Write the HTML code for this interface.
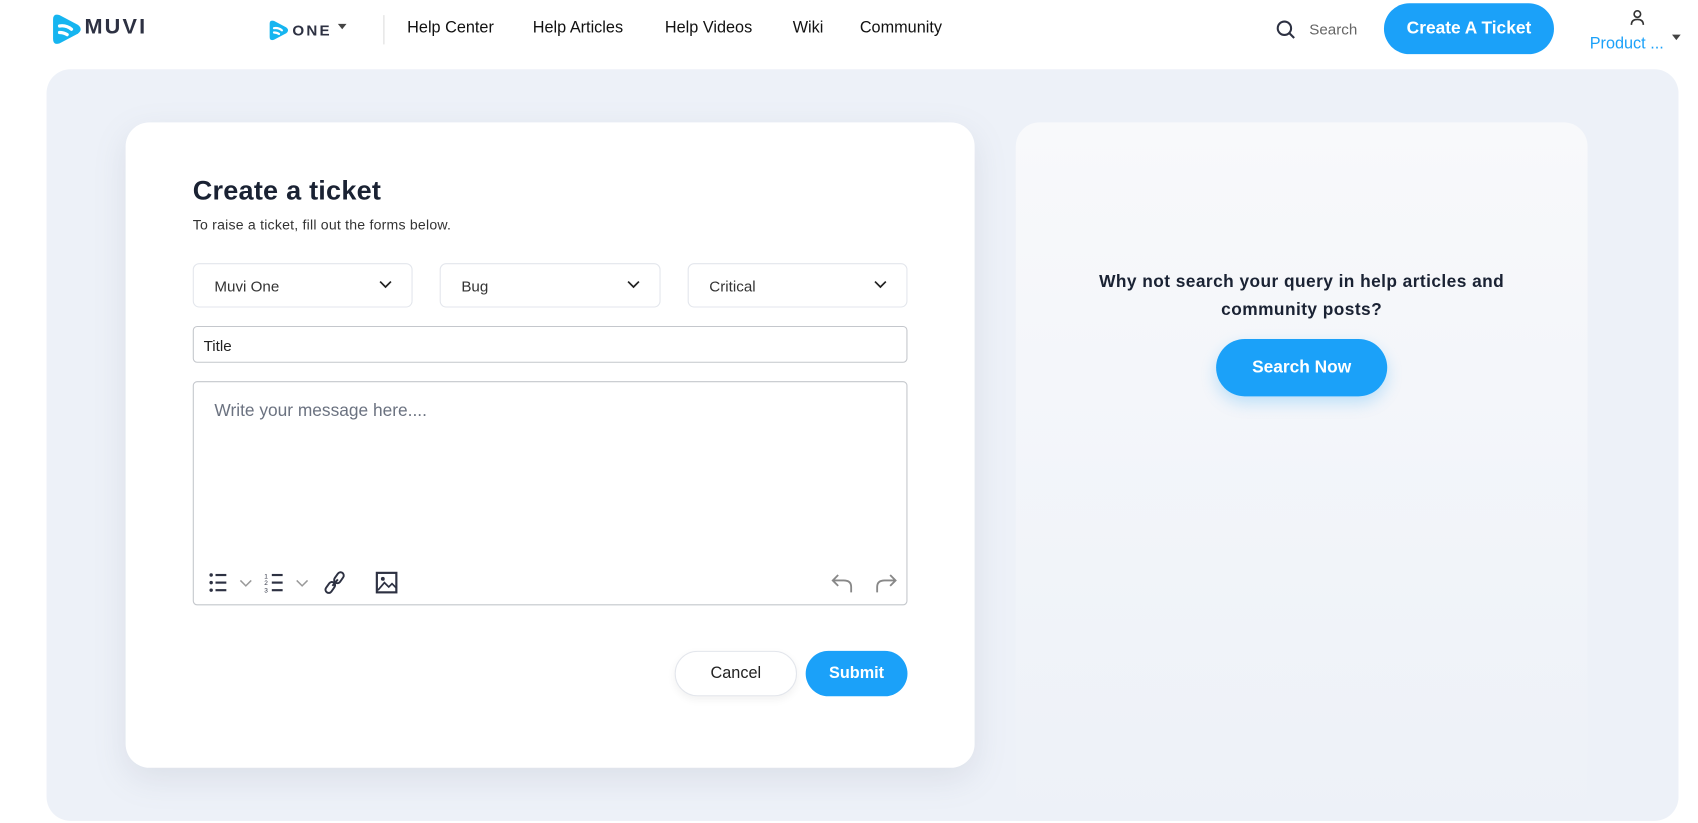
<!DOCTYPE html>
<html><head><meta charset="utf-8"><style>
*{box-sizing:border-box;margin:0;padding:0}
html,body{width:1698px;height:823px;overflow:hidden;background:#fff}
#w{width:1568px;height:760px;position:relative;transform:scale(1.08291);transform-origin:0 0;font-family:"Liberation Sans",sans-serif;color:#111}
.a{position:absolute}
.nav{font-size:15px;color:#111;top:17px}
.sel{position:absolute;top:243px;height:41px;border:1px solid #e3e6ec;border-radius:6px;background:#fff;font-size:14px;color:#333;padding:12px 0 0 19px}
.sel svg{position:absolute;right:18px;top:15px}
.blue{background:#1ba1f9;color:#fff;font-weight:bold;border-radius:30px;text-align:center}
</style></head><body><div id="w">
<svg class="a" style="left:46px;top:12px" width="30" height="30" viewBox="0 0 30 30"><path d="M3 6 Q3 0 9 2 L26 11 Q31 15 26 19 L9 28 Q3 30 3 24Z" fill="#16b5f0"/><path d="M9 12 Q15 11 20 15 M9 18 Q13 18 16 20" stroke="#fff" stroke-width="3" fill="none" stroke-linecap="round"/></svg>
<div class="a" style="left:78px;top:14px;font-size:20px;font-weight:bold;letter-spacing:2px;color:#2d3142">MUVI</div>
<svg class="a" style="left:247px;top:17px" width="20" height="22" viewBox="0 0 30 30"><path d="M3 6 Q3 0 9 2 L26 11 Q31 15 26 19 L9 28 Q3 30 3 24Z" fill="#16b5f0"/><path d="M9 12 Q15 11 20 15 M9 18 Q13 18 16 20" stroke="#fff" stroke-width="3" fill="none" stroke-linecap="round"/></svg>
<div class="a" style="left:270px;top:20px;font-size:14px;font-weight:bold;letter-spacing:2px;color:#2d3142">ONE</div>
<div class="a" style="left:312px;top:22px;border:4px solid transparent;border-top:5px solid #444"></div>
<div class="a" style="left:354px;top:14px;width:1px;height:27px;background:#ddd"></div>
<div class="a nav" style="left:376px">Help Center</div>
<div class="a nav" style="left:492px">Help Articles</div>
<div class="a nav" style="left:614px">Help Videos</div>
<div class="a nav" style="left:732px">Wiki</div>
<div class="a nav" style="left:794px">Community</div>
<svg class="a" style="left:1178px;top:18px" width="19" height="19" viewBox="0 0 20 20"><circle cx="8.5" cy="8.5" r="6.5" fill="none" stroke="#2d3142" stroke-width="2"/><path d="M13.5 13.5 L18 18" stroke="#2d3142" stroke-width="2"/></svg>
<div class="a" style="left:1209px;top:19px;font-size:14px;color:#666">Search</div>
<div class="a blue" style="left:1278px;top:3px;width:157px;height:47px;line-height:47px;font-size:16px">Create A Ticket</div>
<svg class="a" style="left:1504px;top:8px" width="16" height="16" viewBox="0 0 16 16"><circle cx="8" cy="5" r="3" fill="none" stroke="#333" stroke-width="1.5"/><path d="M2.5 15 Q2.5 10 8 10 Q13.5 10 13.5 15" fill="none" stroke="#333" stroke-width="1.5"/></svg>
<div class="a" style="left:1468px;top:32px;font-size:15px;color:#1ba1f9">Product ...</div>
<div class="a" style="left:1544px;top:32px;border:4px solid transparent;border-top:5px solid #444"></div>
<div class="a" style="left:43px;top:64px;width:1507px;height:694px;background:#edf1f8;border-radius:22px"></div>
<div class="a" style="left:116px;top:113px;width:784px;height:596px;background:#fff;border-radius:22px;box-shadow:0 10px 30px rgba(120,130,150,.15)"></div>
<div class="a" style="left:938px;top:113px;width:528px;height:645px;background:linear-gradient(#f8f9fb,#edf1f8);border-radius:22px 22px 0 0"></div>
<div class="a" style="left:178px;top:162px;font-size:25px;font-weight:bold;color:#1a2233;letter-spacing:0.2px">Create a ticket</div>
<div class="a" style="left:178px;top:200px;font-size:13px;color:#333;letter-spacing:0.2px">To raise a ticket, fill out the forms below.</div>
<div class="sel" style="left:178px;width:203px">Muvi One<svg width="12" height="8" viewBox="0 0 12 8"><path d="M1 1 L6 6 L11 1" fill="none" stroke="#222" stroke-width="1.6"/></svg></div>
<div class="sel" style="left:406px;width:204px">Bug<svg width="12" height="8" viewBox="0 0 12 8"><path d="M1 1 L6 6 L11 1" fill="none" stroke="#222" stroke-width="1.6"/></svg></div>
<div class="sel" style="left:635px;width:203px">Critical<svg width="12" height="8" viewBox="0 0 12 8"><path d="M1 1 L6 6 L11 1" fill="none" stroke="#222" stroke-width="1.6"/></svg></div>
<div class="a" style="left:178px;top:301px;width:660px;height:34px;border:1px solid #c4c7cc;border-radius:4px;font-size:14px;color:#222;padding:9px 0 0 9px">Title</div>
<div class="a" style="left:178px;top:352px;width:660px;height:207px;border:1px solid #c4c7cc;border-radius:4px"></div>
<div class="a" style="left:198px;top:371px;font-size:16px;color:#6b7280">Write your message here....</div>
<svg class="a" style="left:190px;top:527px" width="200" height="22" viewBox="0 0 200 22">
<g fill="#2d3142"><circle cx="5" cy="4" r="1.6"/><circle cx="5" cy="11" r="1.6"/><circle cx="5" cy="18" r="1.6"/><rect x="9" y="3" width="10" height="2"/><rect x="9" y="10" width="10" height="2"/><rect x="9" y="17" width="10" height="2"/>
<rect x="61" y="3" width="10" height="2"/><rect x="61" y="10" width="10" height="2"/><rect x="61" y="17" width="10" height="2"/></g>
<text x="54" y="7" font-size="6" fill="#2d3142" font-family="Liberation Sans">1</text><text x="54" y="13" font-size="6" fill="#2d3142" font-family="Liberation Sans">2</text><text x="54" y="20" font-size="6" fill="#2d3142" font-family="Liberation Sans">3</text>
<path d="M32 9 L37 14 L42 9 M84 9 L89 14 L94 9" fill="none" stroke="#999" stroke-width="1.4"/>
<rect x="112" y="10" width="6" height="11" rx="3" transform="rotate(35 115 15.5)" fill="none" stroke="#2d3142" stroke-width="1.8"/>
<rect x="120" y="1" width="6" height="11" rx="3" transform="rotate(35 123 6.5)" fill="none" stroke="#2d3142" stroke-width="1.8"/>
<path d="M117 14 L122 8" stroke="#2d3142" stroke-width="1.8"/>
<rect x="158" y="2" width="18" height="18" fill="none" stroke="#2d3142" stroke-width="2"/><circle cx="163.5" cy="7.5" r="1.8" fill="#2d3142"/><path d="M159 18 L165 11 L169 15 L172 12 L176 16" fill="none" stroke="#2d3142" stroke-width="1.6"/>
</svg>
<svg class="a" style="left:766px;top:527px" width="64" height="22" viewBox="0 0 64 22"><path d="M8 4 L3 9 L8 14 M3 9 H13 Q20 9 20 15 V20" fill="none" stroke="#888" stroke-width="1.7"/><path d="M56 4 L61 9 L56 14 M61 9 H51 Q44 9 44 15 V20" fill="none" stroke="#888" stroke-width="1.7"/></svg>
<div class="a" style="left:623px;top:601px;width:113px;height:42px;border:1px solid #e3e6ec;border-radius:22px;background:#fff;text-align:center;line-height:40px;font-size:15px;color:#222;box-shadow:0 3px 8px rgba(0,0,0,.06)">Cancel</div>
<div class="a blue" style="left:744px;top:601px;width:94px;height:42px;line-height:42px;font-size:15px">Submit</div>
<div class="a" style="left:938px;top:248px;width:528px;text-align:center;font-size:16px;font-weight:bold;line-height:26px;color:#1a2233;letter-spacing:0.4px">Why not search your query in help articles and<br>community posts?</div>
<div class="a blue" style="left:1123px;top:313px;width:158px;height:53px;line-height:53px;font-size:16px;box-shadow:0 6px 14px rgba(27,161,249,.25)">Search Now</div>
</div></body></html>
